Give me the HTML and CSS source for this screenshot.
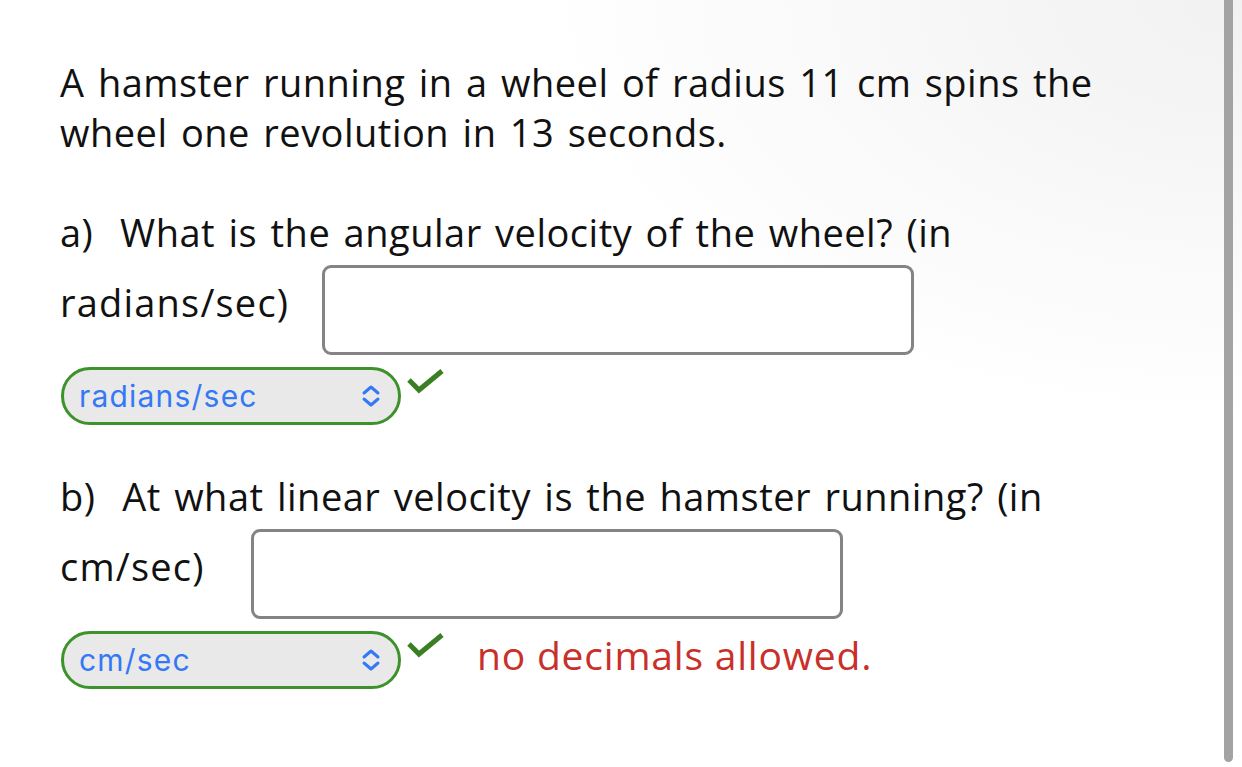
FILE: index.html
```html
<!DOCTYPE html>
<html lang="en">
<head>
  <meta charset="UTF-8">
  <meta name="viewport" content="width=device-width, initial-scale=1.0">
  <title>Hamster Wheel</title>
  <link rel="stylesheet" href="styles.css">
</head>
<body>
  <div class="page">
    <p class="intro">A hamster running in a wheel of radius 11 cm spins the wheel one revolution in 13 seconds.</p>

    <!-- Part a -->
    <div class="part part-a">
      <p class="question">a)&nbsp; What is the angular velocity of the wheel? (in <span class="unit">radians/sec)</span> <input type="text" class="answer-input"></p>
      <div class="answer-row">
        <span class="unit-wrap">
          <select class="unit-select">
            <option>radians/sec</option>
          </select>
          <svg class="chevron" width="20" height="22" viewBox="0 0 20 22"><polyline points="3,8 10,2 17,8" /><polyline points="3,14 10,20 17,14" /></svg>
        </span>
        <svg class="check" width="40" height="28" viewBox="0 0 40 28"><polyline points="4,12 14,22 37,3" /></svg>
      </div>
    </div>

    <!-- Part b -->
    <div class="part part-b">
      <p class="question">b)&nbsp; At what linear velocity is the hamster running? (in <span class="unit">cm/sec)</span> <input type="text" class="answer-input"></p>
      <div class="answer-row">
        <span class="unit-wrap">
          <select class="unit-select">
            <option>cm/sec</option>
          </select>
          <svg class="chevron" width="20" height="22" viewBox="0 0 20 22"><polyline points="3,8 10,2 17,8" /><polyline points="3,14 10,20 17,14" /></svg>
        </span>
        <svg class="check" width="40" height="28" viewBox="0 0 40 28"><polyline points="4,12 14,22 37,3" /></svg>
        <span class="feedback">no decimals allowed.</span>
      </div>
    </div>
  </div>

  <div class="scrollbar"></div>
</body>
</html>
```

FILE: styles.css
```css
body {
  margin: 0;
  padding: 0;
  font-family: "Open Sans", sans-serif;
  color: #111;
  background: radial-gradient(ellipse 700px 420px at 100% 0, #f1f1f1, #ffffff 100%);
  min-height: 100vh;
  overflow: hidden;
}

.page {
  padding: 0 60px;
  width: 1060px;
}

p {
  margin: 0;
}

.intro,
.question {
  font-size: 38px;
  line-height: 50px;
  letter-spacing: 0.5px;
  word-spacing: 3px;
}

.unit {
  letter-spacing: 1.2px;
}

.intro {
  padding-top: 57px;
}

.part-a {
  margin-top: 50px;
}

.part-b {
  margin-top: 46px;
}

/* Answer box */
.answer-input {
  box-sizing: border-box;
  width: 592px;
  height: 90px;
  margin: 8px 0 2px 19px;
  border: 3px solid #848484;
  border-radius: 9px;
  background: #fff;
  vertical-align: middle;
}

.part-b .answer-input {
  margin-left: 33px;
}

.answer-row {
  display: flex;
  align-items: center;
  margin-top: 10px;
}

.unit-wrap {
  position: relative;
  display: inline-block;
}

.unit-select {
  appearance: none;
  -webkit-appearance: none;
  box-sizing: border-box;
  width: 340px;
  height: 58px;
  margin-left: 1px;
  padding: 0 0 0 15px;
  border: 3px solid #3e922b;
  border-radius: 29px;
  background: #e9e9e9;
  color: #3478f6;
  font-family: Inter, "Liberation Sans", sans-serif;
  font-size: 30px;
  letter-spacing: 1.2px;
}

.chevron {
  position: absolute;
  right: 20px;
  top: 18px;
  fill: none;
  stroke: #3478f6;
  stroke-width: 3;
  stroke-linecap: round;
  stroke-linejoin: round;
}

.check {
  margin: -28px 0 0 4px;
  fill: none;
  stroke: #3a7f24;
  stroke-width: 5;
}

.feedback {
  margin-left: 32px;
  padding-bottom: 10px;
  font-size: 39px;
  line-height: 40px;
  letter-spacing: 0.8px;
  color: #c9302a;
}

.scrollbar {
  position: fixed;
  top: 0;
  right: 9px;
  width: 9px;
  height: 762px;
  border-radius: 0 0 5px 5px;
  background: #a3a3a3;
}
```
